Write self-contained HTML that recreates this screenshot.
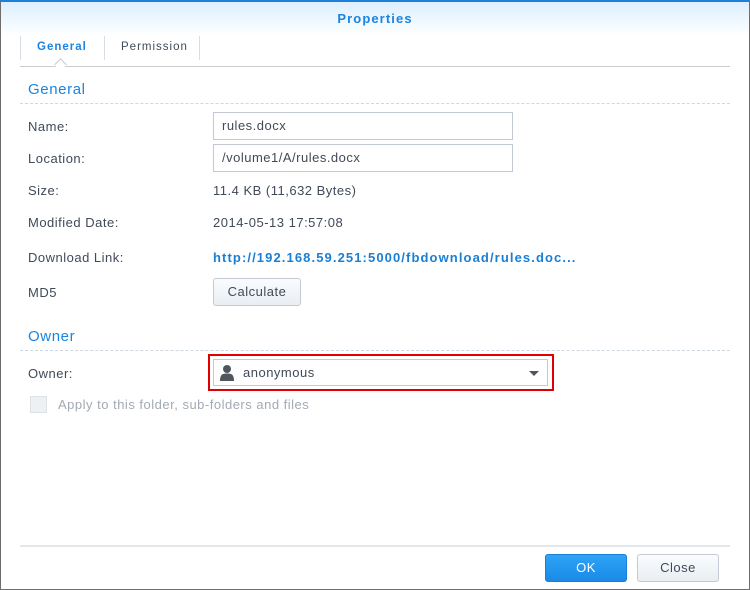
<!DOCTYPE html><html><head><style>
*{margin:0;padding:0;box-sizing:border-box}
body{width:750px;height:590px;overflow:hidden;font-family:"Liberation Sans",sans-serif;font-size:13px;color:#404a58;background:#fff;position:relative;letter-spacing:0.5px}
.frame{position:absolute;inset:0;border:1px solid #6d6d6d;border-top:2px solid #1d7fd6}
.hdr{position:absolute;left:1px;right:1px;top:2px;height:34px;background:linear-gradient(#dcefff,#fff)}
.a{position:absolute;white-space:nowrap}
.title{left:0;right:0;top:11px;text-align:center;color:#1a84e0;font-weight:bold;font-size:13px;letter-spacing:1.1px}
.tab{top:41px;font-size:11.5px;letter-spacing:1px}
.sep{position:absolute;top:36px;width:1px;height:24px;background:#d6dde5}
.line{position:absolute;left:20px;right:20px;height:1px;background:#d4d8dc}
.dash{position:absolute;left:20px;right:20px;border-top:1px dashed #cfd8e0}
.sec{font-size:15px;color:#1a84e0;left:28px;letter-spacing:0.6px}
.lbl{left:28px}
.inp{position:absolute;border:1px solid #c3cad3;background:#fff;padding-left:8px;line-height:26px}
.btn{position:absolute;border:1px solid #c3cad3;border-radius:3px;background:linear-gradient(#fafcfd,#e9eef3);text-align:center;color:#404a58}
</style></head><body>
<div class="frame"></div><div class="hdr"></div>
<div class="a title">Properties</div>
<div class="sep" style="left:20px"></div><div class="sep" style="left:104px"></div><div class="sep" style="left:199px"></div>
<div class="a tab" style="left:37px;color:#1a84e0;font-weight:bold">General</div>
<div class="a tab" style="left:121px">Permission</div>
<div class="line" style="top:66px;background:#c8cdd2"></div>
<div style="position:absolute;left:56px;top:60px;width:9px;height:9px;background:#fff;border-left:1px solid #c8cdd2;border-top:1px solid #c8cdd2;transform:rotate(45deg)"></div>
<div class="a sec" style="top:81px">General</div>
<div class="dash" style="top:103px"></div>
<div class="a lbl" style="top:119px">Name:</div>
<div class="inp" style="left:213px;top:112px;width:300px;height:28px">rules.docx</div>
<div class="a lbl" style="top:151px">Location:</div>
<div class="inp" style="left:213px;top:144px;width:300px;height:28px">/volume1/A/rules.docx</div>
<div class="a lbl" style="top:183px">Size:</div><div class="a" style="left:213px;top:183px">11.4 KB (11,632 Bytes)</div>
<div class="a lbl" style="top:215px">Modified Date:</div><div class="a" style="left:213px;top:215px">2014-05-13 17:57:08</div>
<div class="a lbl" style="top:250px">Download Link:</div><div class="a" style="left:213px;top:250px;color:#1a7fd4;font-weight:bold;letter-spacing:1.1px">http://192.168.59.251:5000/fbdownload/rules.doc...</div>
<div class="a lbl" style="top:285px">MD5</div>
<div class="btn" style="left:213px;top:278px;width:88px;height:28px;line-height:26px">Calculate</div>
<div class="a sec" style="top:328px">Owner</div>
<div class="dash" style="top:350px"></div>
<div class="a lbl" style="top:366px">Owner:</div>
<div style="position:absolute;left:208px;top:354px;width:346px;height:37px;border:2px solid #e00000"></div>
<div class="inp" style="left:213px;top:359px;width:335px;height:27px;padding-left:29px">anonymous</div>
<svg style="position:absolute;left:219px;top:364px" width="16" height="17" viewBox="0 0 16 17"><circle cx="8" cy="5" r="4" fill="#4f5660"/><path d="M1 17 C1 10 4 9.5 8 9.5 C12 9.5 15 10 15 17Z" fill="#4f5660"/></svg>
<div style="position:absolute;left:529px;top:371px;border-left:5px solid transparent;border-right:5px solid transparent;border-top:5px solid #4f5660"></div>
<div style="position:absolute;left:30px;top:396px;width:17px;height:17px;border:1px solid #dde2e7;background:#eef1f4"></div>
<div class="a" style="left:58px;top:397px;color:#a2aab3">Apply to this folder, sub-folders and files</div>
<div class="line" style="top:545px;height:2px;background:#e3e6ea"></div>
<div class="btn" style="left:545px;top:554px;width:82px;height:28px;line-height:26px;background:linear-gradient(#2ea4f7,#1a8ae6);border-color:#1a80d8;color:#fff">OK</div>
<div class="btn" style="left:637px;top:554px;width:82px;height:28px;line-height:26px">Close</div>
</body></html>
